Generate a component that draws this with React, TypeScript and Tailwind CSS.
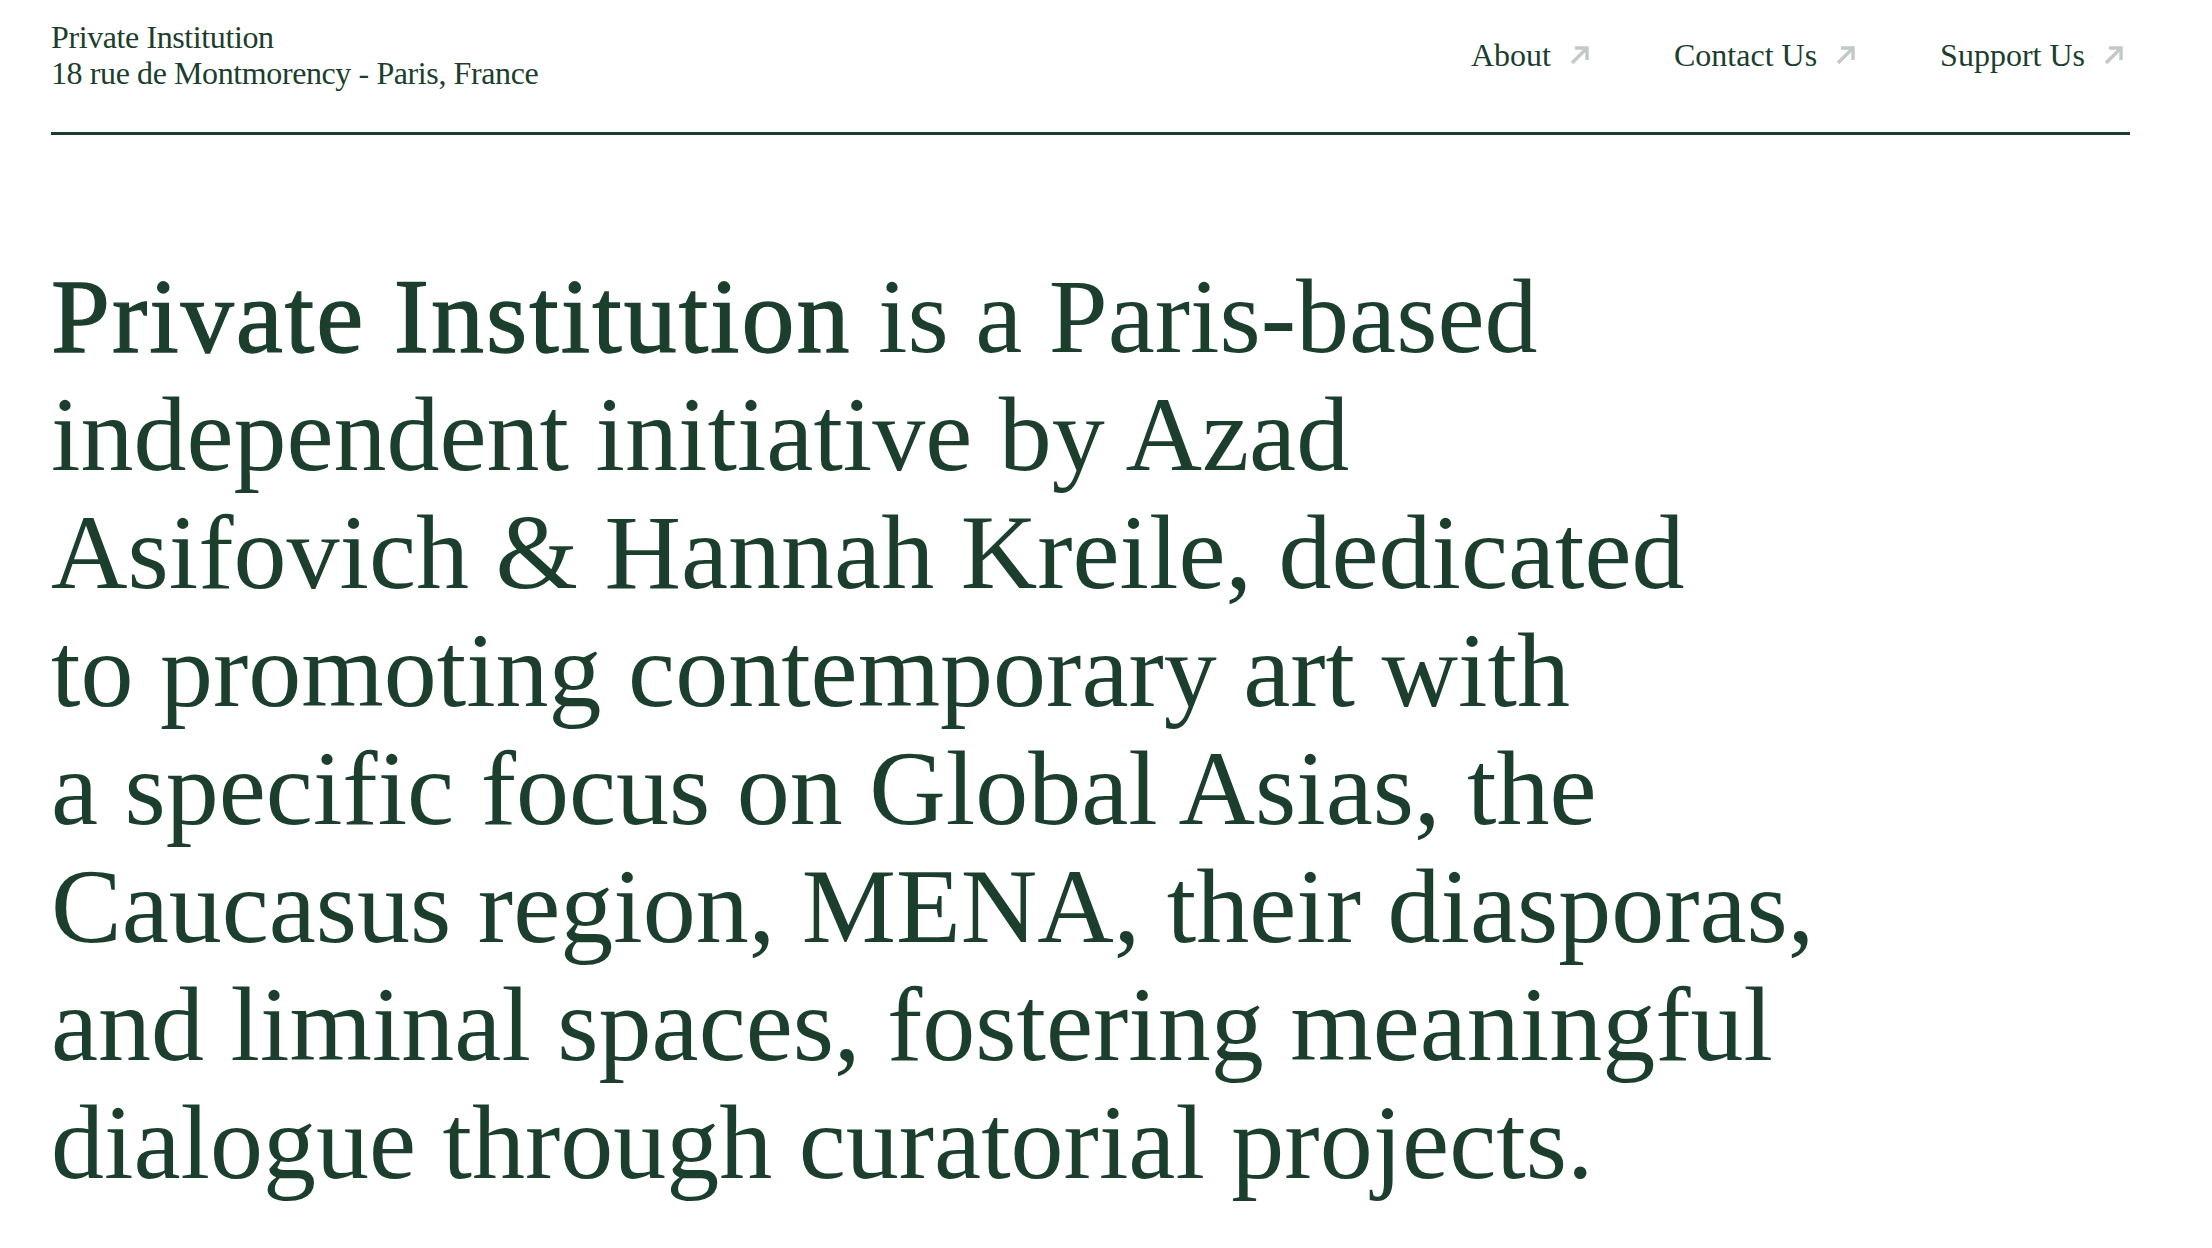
const Arrow = () => (
  <svg
    width="20"
    height="20"
    viewBox="0 0 20 20"
    fill="none"
    stroke="#c1cac4"
    strokeWidth="3.4"
    className="shrink-0"
  >
    <path d="M2 18 L16.5 3.5" />
    <path d="M5 3 H17 V15" />
  </svg>
)

const NavItem = ({ children }: { children: string }) => (
  <a href="#" className="flex items-center gap-[19px] text-[32px] leading-[36px]">
    <span>{children}</span>
    <Arrow />
  </a>
)

export default function App() {
  return (
    <div className="min-h-screen bg-white text-[#1b3e2d] font-['Liberation_Serif','Times_New_Roman',serif]">
      <header className="ml-[51px] mr-[82px] flex items-center justify-between pt-[19px] pb-[41px] border-b-[3px] border-[#1b3e2d]">
        <div className="text-[32px] leading-[36px] tracking-[-0.4px]">
          <div>Private Institution</div>
          <div>18 rue de Montmorency - Paris, France</div>
        </div>
        <nav className="flex items-center gap-[84px] pr-[6px]">
          <NavItem>About</NavItem>
          <NavItem>Contact Us</NavItem>
          <NavItem>Support Us</NavItem>
        </nav>
      </header>

      <main className="px-[51px] pt-[123px]">
        <h1 className="text-[106px] leading-[118px] font-normal whitespace-nowrap">
          <span className="tracking-[2px] [-webkit-text-stroke:1.3px_#1b3e2d]">Private Institution</span> is a Paris-based
          <br />
          independent initiative by Azad
          <br />
          Asifovich &amp; Hannah Kreile, dedicated
          <br />
          to promoting contemporary art with
          <br />
          a specific focus on Global Asias, the
          <br />
          Caucasus region, MENA, their diasporas,
          <br />
          and liminal spaces, fostering meaningful
          <br />
          dialogue through curatorial projects.
        </h1>
      </main>
    </div>
  )
}
